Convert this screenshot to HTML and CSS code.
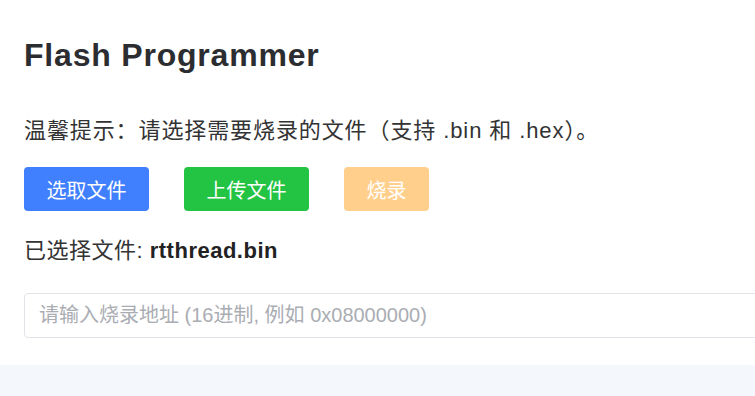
FILE: index.html
```html
<!DOCTYPE html>
<html lang="zh-CN">
<head>
    <meta charset="UTF-8">
    <meta name="viewport" content="width=device-width, initial-scale=1.0">
    <title>Flash Programmer</title>
    <link rel="stylesheet" href="styles.css">
</head>
<body>
    <div class="page">
        <div class="card">
            <h1 class="title">Flash Programmer</h1>
            <p class="hint">温馨提示：请选择需要烧录的文件（支持 .bin 和 .hex）。</p>
            <div class="actions">
                <button class="btn btn-select">选取文件</button>
                <button class="btn btn-upload">上传文件</button>
                <button class="btn btn-flash" disabled>烧录</button>
            </div>
            <p class="selected">已选择文件: <strong>rtthread.bin</strong></p>
            <input type="text" class="address" placeholder="请输入烧录地址 (16进制, 例如 0x08000000)">
        </div>
    </div>
</body>
</html>
```

FILE: styles.css
```css
body {
    margin: 0;
    padding: 0;
    font-family: "Liberation Sans", Arial, "Noto Sans CJK SC", sans-serif;
    background-color: #f4f7fb;
    color: #333;
    overflow-x: hidden;
}
.page {
    min-width: 960px;
}
.card {
    background-color: #fff;
    padding: 24px 24px 27px;
    box-shadow: 0 5px 16px rgba(0, 0, 0, 0.08);
}
.title {
    margin: 12px 0 0;
    font-size: 32px;
    line-height: 38px;
    font-weight: bold;
    letter-spacing: 0.8px;
    color: #2b2d30;
}
.hint {
    margin: 41px 0 0;
    font-size: 22px;
    line-height: 32px;
    letter-spacing: 0.9px;
}
.actions {
    display: flex;
    gap: 35px;
    margin-top: 20px;
}
.btn {
    height: 44px;
    padding: 0 22.5px;
    border: none;
    border-radius: 4px;
    color: #fff;
    font-family: inherit;
    font-size: 20px;
    cursor: pointer;
}
.btn-select {
    background-color: #4080ff;
}
.btn-upload {
    background-color: #23c343;
}
.btn-flash {
    background-color: #ffcf8b;
    cursor: not-allowed;
}
.selected {
    margin: 24px 0 0;
    font-size: 22px;
    line-height: 32px;
    letter-spacing: 0.5px;
}
.selected strong {
    color: #222;
}
.address {
    display: block;
    box-sizing: border-box;
    width: 900px;
    height: 45px;
    margin-top: 26px;
    padding: 0 14px;
    border: 1px solid #e1e3e8;
    border-radius: 4px;
    font-family: inherit;
    font-size: 20px;
    color: #333;
    outline: none;
}
.address::placeholder {
    color: #aaadb3;
}
```
